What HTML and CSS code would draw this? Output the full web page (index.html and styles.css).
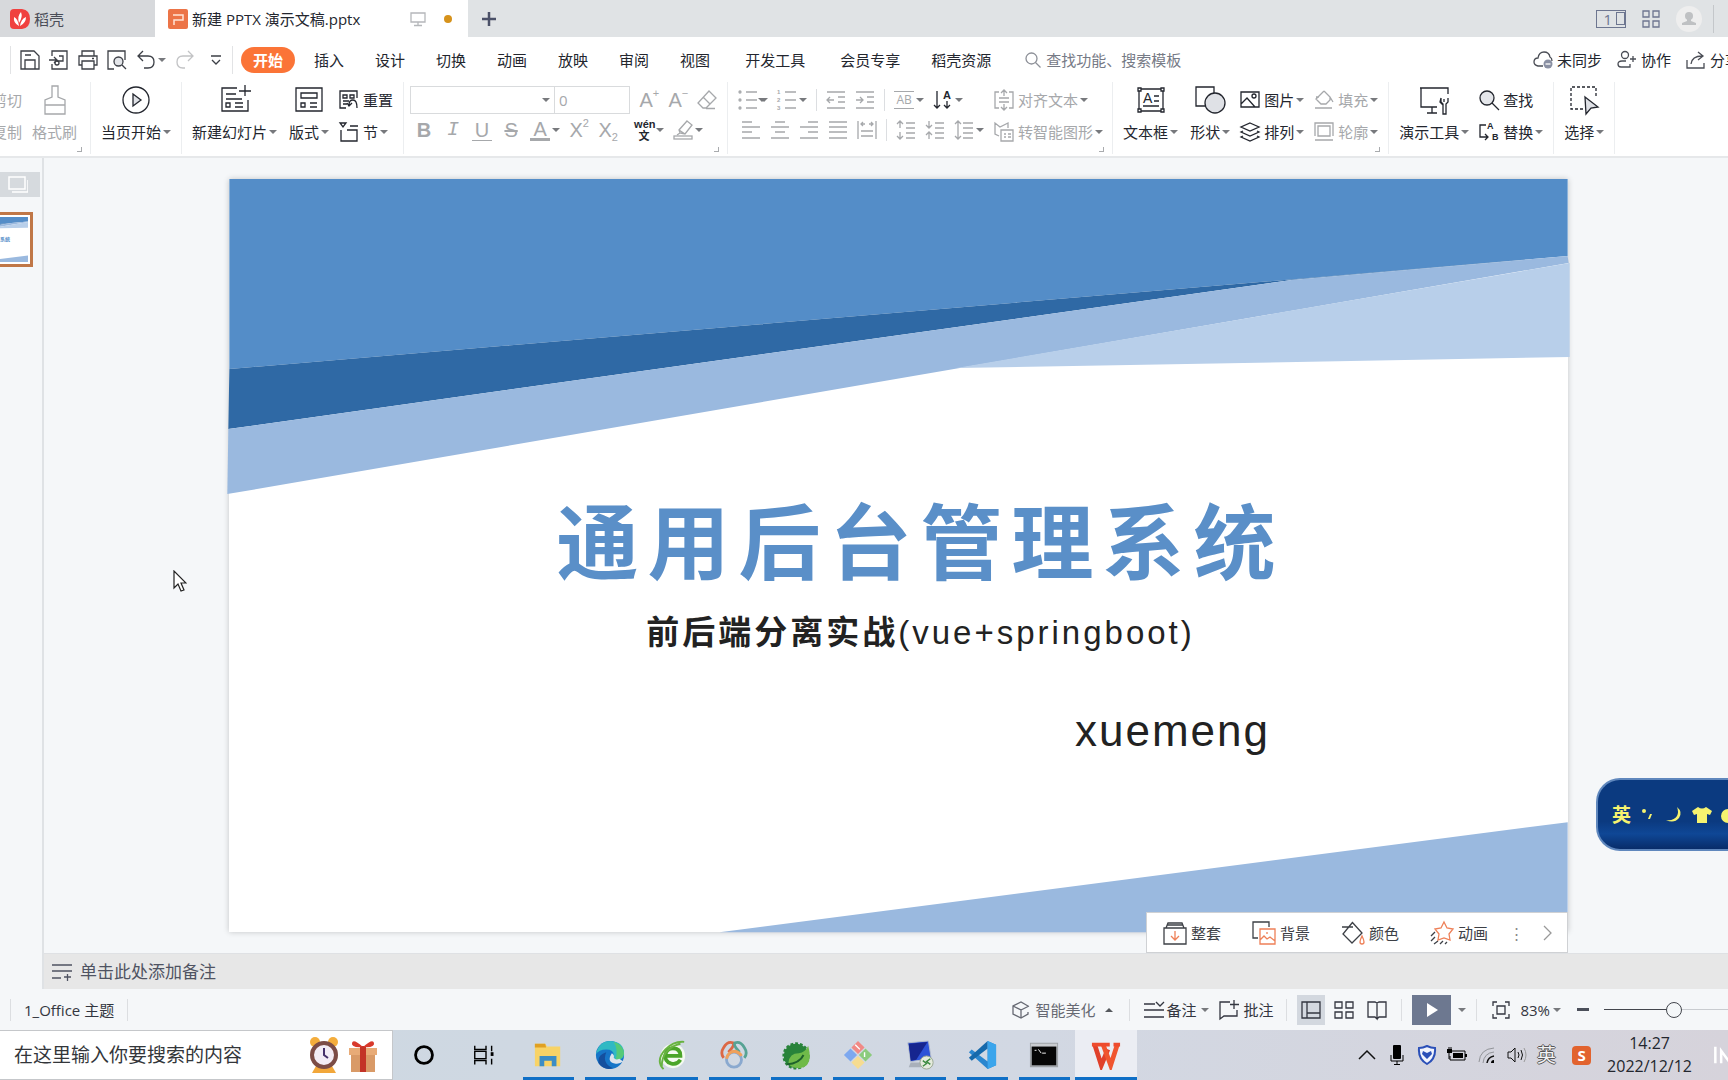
FILE: index.html
```html
<!DOCTYPE html>
<html lang="zh-CN">
<head>
    <meta charset="UTF-8">
    <meta name="viewport" content="width=device-width, initial-scale=1.0">
    <title>新建 PPTX 演示文稿.pptx</title>
    <link rel="stylesheet" href="styles.css">
</head>
<body>

    <!-- Tabs -->
    <header class="tab-bar">
        <button class="tab">
            <svg class="logo" viewBox="0 0 20 20"><path d="M4 0H12Q20 1 20 10T12 20H4Q0 20 0 16V4Q0 0 4 0Z" fill="#f0413f"/><path d="M9 17Q3 14 4 8Q8 10 9 17ZM9 14Q7 7 11 3Q13 8 9 14ZM10 17Q11 10 16 8Q16 14 10 17Z" fill="#fff"/></svg>
            稻壳
        </button>
        <button class="tab tab-active">
            <svg class="logo" viewBox="0 0 20 20"><rect width="20" height="20" rx="2" fill="#ec7447"/><path d="M5 6H15V11H6V16" fill="none" stroke="#ffe3d6" stroke-width="1.500"/></svg>
            <span class="tab-name">新建 PPTX 演示文稿.pptx</span>
            <svg class="icon icon-sm light" viewBox="0 0 16 16"><path d="M1 2H15V11H1ZM8 11V14M4 14.500H12"/></svg>
            <i class="dot"></i>
        </button>
        <button class="new-tab" aria-label="新建"><svg class="icon icon-sm" viewBox="0 0 16 16"><path d="M8 1V15M1 8H15" stroke-width="2.500"/></svg></button>
        <div class="window-tools">
            <button class="page-switch" aria-label="页面"><span>1</span><i></i></button>
            <button aria-label="应用"><svg class="icon" viewBox="0 0 20 20"><path d="M2 2H8V8H2ZM12 2H18V8H12ZM2 12H8V18H2ZM12 12H18V18H12Z"/></svg></button>
            <button class="avatar" aria-label="账户"><svg viewBox="0 0 26 26"><circle cx="13" cy="13" r="13" fill="#eeeeee"/><circle cx="13" cy="10" r="4" fill="#bfc1c3"/><path d="M11 12H15V15L20 17V19H6V17L11 15Z" fill="#bfc1c3"/></svg></button>
            <i class="sep"></i>
        </div>
    </header>

    <!-- Menu -->
    <nav class="menu-bar">
        <div class="quick">
            <button aria-label="保存"><svg class="icon" viewBox="0 0 20 20"><path d="M1 1H14L19 6V19H1ZM5 19V10H15V19M5 5H11"/></svg></button>
            <button aria-label="导出"><svg class="icon" viewBox="0 0 20 20"><path d="M3 6V1H18V19H3V14M0 10H8M5 7L8 10L5 13M10 6H14V11H8"/><circle cx="8" cy="13" r="2"/></svg></button>
            <button aria-label="打印"><svg class="icon" viewBox="0 0 20 20"><path d="M4 6V1H16V6M4 15H1V6H19V15H16M4 11H16V19H4ZM14 8.500H16"/></svg></button>
            <button aria-label="预览"><svg class="icon" viewBox="0 0 20 20"><path d="M7 19H1V1H18V10M15 15L19 19"/><circle cx="11.500" cy="11.500" r="4.500" fill="#e4e6ea"/></svg></button>
            <button aria-label="撤销"><svg class="icon" viewBox="0 0 20 20"><path d="M7 1L2 6L7 11M2 6H12Q18 6 18 12T12 18H8"/></svg><i class="caret"></i></button>
            <button class="off" aria-label="恢复"><svg class="icon" viewBox="0 0 20 20"><path d="M13 1L18 6L13 11M18 6H8Q2 6 2 12T8 18H10"/></svg></button>
            <button aria-label="更多"><svg class="icon icon-sm" viewBox="0 0 16 16"><path d="M3 4H13M4 8L8 12L12 8"/></svg></button>
        </div>
        <ul class="menu">
            <li><a class="current" href="#">开始</a></li>
            <li><a href="#">插入</a></li>
            <li><a href="#">设计</a></li>
            <li><a href="#">切换</a></li>
            <li><a href="#">动画</a></li>
            <li><a href="#">放映</a></li>
            <li><a href="#">审阅</a></li>
            <li><a href="#">视图</a></li>
            <li class="wide"><a href="#">开发工具</a></li>
            <li class="wide"><a href="#">会员专享</a></li>
            <li><a href="#">稻壳资源</a></li>
        </ul>
        <label class="search">
            <svg class="icon icon-sm" viewBox="0 0 16 16"><circle cx="6.500" cy="6.500" r="5.500"/><path d="M10.500 10.500L15.500 15.500"/></svg>
            <input type="text" placeholder="查找功能、搜索模板" aria-label="查找功能、搜索模板">
        </label>
        <div class="share">
            <button><svg class="icon" viewBox="0 0 20 20"><path d="M10 16H5Q1 15 1 12Q1 8 5 8Q6 2 11 2Q16 2 17 7Q19 8 19 11"/><circle cx="15" cy="14" r="4.500" fill="#8a90a3" stroke="none"/><path d="M12.500 14H17.500" stroke="#fff"/></svg>未同步</button>
            <button><svg class="icon" viewBox="0 0 20 20"><circle cx="8" cy="5" r="3.500"/><path d="M9 11H5Q1 11 1 14Q1 17 4 17H13V14M16 6V12M13 9H19"/></svg>协作</button>
            <button><svg class="icon" viewBox="0 0 20 20"><path d="M1 10V18H18V13M5 14Q6 6 16 6M12 2L17 6L12 10"/></svg>分享</button>
        </div>
    </nav>

    <!-- Ribbon -->
    <section class="ribbon">
        <div class="group clip">
            <div class="stack off">
                <button class="small">剪切</button>
                <button class="small">复制</button>
            </div>
            <button class="big off"><svg class="icon icon-lg" viewBox="0 0 30 30"><path d="M12 1H18V12L25 15V29H5V15L12 12ZM5 20H25"/></svg><span>格式刷</span></button>
            <i class="corner"></i>
        </div>
        <div class="group">
            <button class="big"><svg class="icon icon-lg" viewBox="0 0 30 30"><circle cx="15" cy="15" r="13"/><path d="M12 9L20 15L12 21Z" fill="#dfe1e6"/></svg><span>当页开始<i class="caret"></i></span></button>
        </div>
        <div class="group slides">
            <button class="big"><svg class="icon icon-lg" viewBox="0 0 30 30"><path d="M17 3H2V26H28V15M25 0V11M19 6H31M6 9H16M6 14H22M15 18H23M15 22H23M6 18H10V22H6Z"/></svg><span>新建幻灯片<i class="caret"></i></span></button>
            <button class="big"><svg class="icon icon-lg" viewBox="0 0 30 30"><path d="M2 3H28V26H2ZM7 8H23V13H7ZM16 18H23M16 22H23M7 18H11V22H7Z"/></svg><span>版式<i class="caret"></i></span></button>
            <div class="stack">
                <button class="small"><svg class="icon" viewBox="0 0 20 20"><path d="M7 18H1V1H18V8M4 5H8V8H4ZM11 5H15V8H11ZM4 11H10M4 14H8M10 15Q10 10 14 10Q18 10 18 18M8 13L10 16L13 13"/></svg>重置</button>
                <button class="small"><svg class="icon" viewBox="0 0 20 20"><path d="M11 4H19M2 8V19H18V8H8M1 1H7L4 5Z"/></svg>节<i class="caret"></i></button>
            </div>
        </div>
        <div class="group font-group off">
            <div class="rows">
                <div class="row">
                    <div class="combo">
                        <label class="font-name"><input type="text" aria-label="字体"><i class="caret"></i></label>
                        <label class="font-size"><input type="text" value="0" aria-label="字号"><i class="caret"></i></label>
                    </div>
                    <button class="tool letter">A<sup>+</sup></button>
                    <button class="tool letter">A<sup>−</sup></button>
                    <button class="tool" aria-label="清除"><svg class="icon" viewBox="0 0 20 20"><path d="M12 1L19 8L9 18H6L1 13ZM6 7L13 14M9 18.500H18"/></svg></button>
                </div>
                <div class="row row-font">
                    <button class="tool letter bold">B</button>
                    <button class="tool letter italic">I</button>
                    <button class="tool letter"><span class="under">U</span></button>
                    <button class="tool letter strike">S</button>
                    <button class="tool letter"><span class="ink">A</span><i class="caret"></i></button>
                    <button class="tool letter">X<sup>2</sup></button>
                    <button class="tool letter">X<sub>2</sub></button>
                    <button class="tool pinyin"><span>wén<br>文</span><i class="caret"></i></button>
                    <button class="tool" aria-label="突出显示"><svg class="icon" viewBox="0 0 20 20"><path d="M14 1L19 5L12 14L7 13L6 10ZM7 13L4 15M6 10L12 14"/><rect x="1" y="16" width="18" height="3"/></svg><i class="caret"></i></button>
                </div>
            </div>
            <i class="corner"></i>
        </div>
        <div class="group para-group off">
            <div class="rows">
                <div class="row">
                    <button class="tool" aria-label="项目符号"><svg class="icon" viewBox="0 0 20 20"><path d="M8 2H19M8 10H19M8 18H19"/><circle cx="2" cy="2" r="1"/><circle cx="2" cy="10" r="1"/><circle cx="2" cy="18" r="1"/></svg><i class="caret"></i></button>
                    <button class="tool" aria-label="编号"><svg class="icon" viewBox="0 0 20 20"><path d="M8 2H19M8 10H19M8 18H19"/><g class="num"><text x="0" y="4">1</text><text x="0" y="12">2</text><text x="0" y="20">3</text></g></svg><i class="caret"></i></button>
                    <i class="sep"></i>
                    <button class="tool" aria-label="减少缩进"><svg class="icon" viewBox="0 0 20 20"><path d="M1 2H19M12 7H19M12 12H19M1 18H19M8 10H1M4 7L1 10L4 13"/></svg></button>
                    <button class="tool" aria-label="增加缩进"><svg class="icon" viewBox="0 0 20 20"><path d="M1 2H19M12 7H19M12 12H19M1 18H19M1 10H8M5 7L8 10L5 13"/></svg></button>
                    <i class="sep"></i>
                    <button class="tool"><span class="ab">AB</span><i class="caret"></i></button>
                    <button class="tool dark" aria-label="文字方向"><svg class="icon" viewBox="0 0 20 20"><path d="M4 1V18M1 15L4 18L7 15M14 11V18M11 15L14 18L17 15"/><text class="num num-lg" x="10" y="9">A</text></svg><i class="caret"></i></button>
                </div>
                <div class="row row-para">
                    <button class="tool" aria-label="左对齐"><svg class="icon" viewBox="0 0 20 20"><path d="M1 2H11M1 7H19M1 12H11M1 18H19"/></svg></button>
                    <button class="tool" aria-label="居中"><svg class="icon" viewBox="0 0 20 20"><path d="M5 2H15M1 7H19M5 12H15M1 18H19"/></svg></button>
                    <button class="tool" aria-label="右对齐"><svg class="icon" viewBox="0 0 20 20"><path d="M9 2H19M1 7H19M9 12H19M1 18H19"/></svg></button>
                    <button class="tool" aria-label="两端对齐"><svg class="icon" viewBox="0 0 20 20"><path d="M1 2H19M1 7H19M1 12H19M1 18H19"/></svg></button>
                    <button class="tool" aria-label="分散对齐"><svg class="icon" viewBox="0 0 20 20"><path d="M1 1V19M19 1V19M4 11H16M4 16H16M4 4H8M12 4H16M6 2L4 4L6 6M14 2L16 4L14 6"/></svg></button>
                    <i class="sep"></i>
                    <button class="tool" aria-label="增大行距"><svg class="icon" viewBox="0 0 20 20"><path d="M10 3H19M10 8H19M10 13H19M10 18H19M4 8V1M1 4L4 1L7 4M4 12V19M1 16L4 19L7 16"/></svg></button>
                    <button class="tool" aria-label="减小行距"><svg class="icon" viewBox="0 0 20 20"><path d="M10 3H19M10 8H19M10 13H19M10 18H19M4 1V8M1 5L4 8L7 5M4 19V12M1 15L4 12L7 15"/></svg></button>
                    <button class="tool" aria-label="行距"><svg class="icon" viewBox="0 0 20 20"><path d="M9 3H19M9 8H19M9 13H19M9 18H19M4 1V19M1 4L4 1L7 4M1 16L4 19L7 16"/></svg><i class="caret"></i></button>
                </div>
            </div>
            <div class="stack">
                <button class="small"><svg class="icon" viewBox="0 0 20 20"><path d="M5 2H1V18H5M15 2H19V18H15M5 8H15M5 12H15M10 0V6M10 14V20M7 3L10 0L13 3M7 17L10 20L13 17"/></svg>对齐文本<i class="caret"></i></button>
                <button class="small"><svg class="icon" viewBox="0 0 20 20"><path d="M5 14L1 12V1L6 5L14 1V6M7 8H19V19H7ZM10 12H12M14 12H17M10 15H12M14 15H17"/></svg>转智能图形<i class="caret"></i></button>
            </div>
            <i class="corner"></i>
        </div>
        <div class="group slides">
            <button class="big"><svg class="icon icon-lg" viewBox="0 0 30 30"><path d="M3 4H27V26H3ZM18 11H23M18 16H23M7 21H23"/><path d="M2 3H5V6H2ZM25 3H28V6H25ZM2 24H5V27H2ZM25 24H28V27H25Z" fill="#fff"/><text class="num num-xl" x="7" y="18">A</text></svg><span>文本框<i class="caret"></i></span></button>
            <button class="big"><svg class="icon icon-lg" viewBox="0 0 30 30"><path d="M1 2H19V21H1Z"/><circle cx="20" cy="18" r="10" fill="#dfe1e6"/></svg><span>形状<i class="caret"></i></span></button>
            <div class="stack">
                <button class="small"><svg class="icon" viewBox="0 0 20 20"><path d="M1 2H19V17H1ZM1 14L7 8L15 17"/><circle cx="14" cy="6" r="2"/></svg>图片<i class="caret"></i></button>
                <button class="small"><svg class="icon" viewBox="0 0 20 20"><path d="M10 1L19 5L10 9L1 5ZM3 9L1 10L10 14L19 10L17 9M3 14L1 15L10 19L19 15L17 14"/></svg>排列<i class="caret"></i></button>
            </div>
            <div class="stack off">
                <button class="small"><svg class="icon" viewBox="0 0 20 20"><path d="M10 1L16 7V10L12 14H7L2 9L10 1M2 7H5M16 7L19 12M1 18H18"/></svg>填充<i class="caret"></i></button>
                <button class="small"><svg class="icon" viewBox="0 0 20 20"><path d="M1 14V1H19V14M4 4H16V14H4ZM1 18H19"/></svg>轮廓<i class="caret"></i></button>
            </div>
            <i class="corner"></i>
        </div>
        <div class="group">
            <button class="big"><svg class="icon icon-lg" viewBox="0 0 30 30"><path d="M1 3H29V9M2 3V22H18M13 22V28M8 28H18M22 13V17L24 19V29H27V19L29 17V13M22 13L21 17L24 20M25 14V17"/></svg><span>演示工具<i class="caret"></i></span></button>
            <div class="stack">
                <button class="small"><svg class="icon" viewBox="0 0 20 20"><circle cx="8" cy="8" r="7" fill="#e4e6ea"/><path d="M13 13L20 20"/></svg>查找</button>
                <button class="small"><svg class="icon" viewBox="0 0 20 20"><path d="M7 3H1V15H9M6 12L9 15L6 18"/><g class="num num-md"><text x="8" y="7">A</text><text x="13" y="18">B</text></g></svg>替换<i class="caret"></i></button>
            </div>
        </div>
        <div class="group">
            <button class="big"><svg class="icon icon-lg" viewBox="0 0 30 30"><path d="M14 24H2V2H27V12" stroke-dasharray="3 2"/><path d="M16 12L29 22L22 23L17 29Z" fill="#dfe1e6"/></svg><span>选择<i class="caret"></i></span></button>
        </div>
    </section>

    <!-- Editor -->
    <main class="editor">
        <aside class="outline">
            <button class="outline-toggle" aria-label="幻灯片"><svg viewBox="0 0 20 20"><path d="M1 2H17V14H1Z" fill="none" stroke="#fff" stroke-width="1.500"/><path d="M4 17H20V5" fill="none" stroke="#fff" stroke-width="1.500"/></svg></button>
            <button class="thumb">
                <svg viewBox="0 0 1338 753"><use href="#slide-art"/></svg>
                <span class="thumb-title">通用后台管理系统</span>
            </button>
        </aside>
        <div class="work">
            <div class="stage">
                <article class="slide">
                    <svg class="slide-art" viewBox="0 0 1338 753">
                        <g id="slide-art">
                            <path d="M0 0H1338V77L0 190Z" fill="#548dc8"/>
                            <path d="M0 190L1338 77L1062 101L-1 250Z" fill="#2f69a5"/>
                            <path d="M-1 250L1062 101L1338 77L1339 84L-2 315Z" fill="#9ab9df"/>
                            <path d="M727 189L1340 84V178Z" fill="#b8cfea"/>
                            <path d="M490 753L1338 643V753Z" fill="#9ab9df"/>
                        </g>
                    </svg>
                    <h1>通用后台管理系统</h1>
                    <h2><b>前后端分离实战</b>(vue+springboot)</h2>
                    <p>xuemeng</p>
                </article>
                <div class="beautify">
                    <button><svg class="icon icon-md" viewBox="0 0 24 24"><path d="M1 7H23V23H1ZM3 7L5 2H19L21 7M4 4H20"/><path class="orange" d="M12 10V19M8 15L12 19L16 15"/></svg>整套</button>
                    <button><svg class="icon icon-md" viewBox="0 0 24 24"><path d="M6 17H1V1H17V6"/><path class="orange" d="M8 8H23V23H8ZM8 19L12 15L15 18L18 16L23 20M15 11V13"/></svg>背景</button>
                    <button><svg class="icon icon-md" viewBox="0 0 24 24"><path d="M11 1L21 12L11 22L2 13L11 2M1 6H12"/><path class="orange" d="M21 15Q17 23 21 23T21 15Z" fill="#fff"/></svg>颜色</button>
                    <button><svg class="icon icon-md" viewBox="0 0 24 24"><path class="orange" d="M14 1L17 7L23 8L19 13L20 19L14 17L8 19L9 13L5 8L11 7Z"/><path d="M1 15L5 11M1 20L5 16M4 23L8 20M10 23L13 20M15 23L17 21"/></svg>动画</button>
                    <button class="more" aria-label="更多">⋮</button>
                    <button class="next" aria-label="下一页"><svg class="icon icon-sm" viewBox="0 0 16 16"><path d="M5 1L12 8L5 15"/></svg></button>
                </div>
                <svg class="pointer" viewBox="0 0 14 22"><path d="M1 1V18L5 14L8 21L11 20L8 13H13Z" fill="#fff" stroke="#222" stroke-width="1.200"/></svg>
            </div>
            <label class="notes">
                <svg class="icon" viewBox="0 0 20 20"><path d="M0 3H20M0 9H20M0 16H9M12 15H19M15.500 12V19"/></svg>
                <input type="text" placeholder="单击此处添加备注" aria-label="单击此处添加备注">
            </label>
        </div>
    </main>

    <!-- Status bar -->
    <footer class="status">
        <i class="sep"></i>
        <span class="theme">1_Office 主题</span>
        <i class="sep"></i>
        <div class="status-right">
            <button class="smart"><svg class="icon" viewBox="0 0 20 20"><path d="M17 12V14L10 18L2 14V6L10 2L17 6M2 6L10 10V18M10 10L18 6"/></svg>智能美化<i class="caret up"></i></button>
            <i class="sep"></i>
            <button class="tight"><svg class="icon" viewBox="0 0 20 20"><path d="M0 4H11M0 10H20M0 17H20M12 2L16 6L20 2"/></svg>备注<i class="caret"></i></button>
            <button class="comment"><svg class="icon" viewBox="0 0 20 20"><path d="M11 2H1V19L5 16H18V10M15 0V9M11 4.500H20"/></svg>批注</button>
            <i class="sep"></i>
            <button class="view selected" aria-label="普通"><svg class="icon" viewBox="0 0 20 20"><path d="M1 2H19V18H1ZM6 2V18M6 13H19"/></svg></button>
            <button class="view" aria-label="浏览"><svg class="icon" viewBox="0 0 20 20"><path d="M1 2H8V8H1ZM12 2H19V8H12ZM1 12H8V18H1ZM12 12H19V18H12Z"/></svg></button>
            <button class="view" aria-label="阅读"><svg class="icon" viewBox="0 0 20 20"><path d="M10 3V19L8 17H1V2H8L10 3L12 2H19V17H12L10 19"/></svg></button>
            <i class="sep"></i>
            <button class="play" aria-label="放映"><svg viewBox="0 0 20 20"><path d="M5 3L16 10L5 17Z" fill="#fff"/></svg></button>
            <button aria-label="放映选项"><i class="caret"></i></button>
            <i class="sep"></i>
            <button class="zoom"><svg class="icon" viewBox="0 0 20 20"><path d="M6 2H2V6M14 2H18V6M2 14V18H6M18 14V18H14M6 6H14V14H6Z"/></svg>83%<i class="caret"></i></button>
            <button class="minus" aria-label="缩小"></button>
            <input class="slider" type="range" min="0" max="100" value="40" aria-label="缩放">
        </div>
    </footer>

    <!-- Taskbar -->
    <footer class="taskbar">
        <label class="task-search">
            <input type="text" placeholder="在这里输入你要搜索的内容" aria-label="在这里输入你要搜索的内容">
            <svg viewBox="0 0 30 38"><path d="M7 30H23L27 37H3Z" fill="#f2a73a"/><circle cx="6" cy="6" r="5" fill="#f4ad3c"/><circle cx="24" cy="6" r="5" fill="#f4ad3c"/><circle cx="15" cy="19" r="12" fill="#f3ecf5" stroke="#7c4c46" stroke-width="4"/><path d="M15 12V19L19 22" fill="none" stroke="#46306a" stroke-width="2"/></svg>
            <svg viewBox="0 0 30 38"><path d="M3 18H27V36H3Z" fill="#d99a67"/><path d="M1 12H29V19H1Z" fill="#e8ab77"/><path d="M12 10H18V36H12Z" fill="#c33327"/><path d="M15 11Q3 12 4 7Q5 2 15 11Q25 2 26 7Q27 12 15 11Z" fill="#d8392c"/></svg>
        </label>
        <div class="apps">
            <button class="app" aria-label="Cortana"><svg viewBox="0 0 32 32"><circle cx="16" cy="16" r="9" fill="none" stroke="#000" stroke-width="3"/></svg></button>
            <button class="app" aria-label="任务视图"><svg viewBox="0 0 32 32"><path d="M4 6V10H16V6M4 26V22H16V26M4 12H16V20H4ZM22 6V12M22 20V26" fill="none" stroke="#000" stroke-width="1.500"/><path d="M21 13H24V17H21Z"/></svg></button>
            <button class="app open" aria-label="文件"><svg viewBox="0 0 32 32"><path d="M2 4H13L15 7H29V28H2Z" fill="#f8d366"/><path d="M2 4H13L14 8H2Z" fill="#e0a023"/><path d="M7 28V17H25V28H20V22H12V28Z" fill="#3c8dc5"/></svg></button>
            <button class="app open" aria-label="Edge"><svg viewBox="0 0 32 32"><circle cx="16" cy="16" r="15" fill="#1675c8"/><path d="M1 15Q4 1 17 1Q31 2 31 15Q30 22 22 21Q18 20 20 16Q20 10 12 10Q4 10 1 15Z" fill="#31b9c3"/><path d="M20 2Q31 5 31 15Q29 22 22 21Q25 10 20 2Z" fill="#55ca78"/><path d="M12 13Q7 25 19 30Q10 33 4 25Q2 16 12 13Z" fill="#144f9e"/><path d="M18 14Q12 23 21 25Q26 26 30 23L26 20Q22 22 20 19Q21 16 18 14Z" fill="#dce3ec"/></svg></button>
            <button class="app open" aria-label="浏览器"><svg viewBox="0 0 32 32"><circle cx="17" cy="17" r="13" fill="#f4faf0"/><path d="M25 21Q21 27 15 25Q8 23 9 16Q10 9 17 9Q25 9 25 17H10" fill="none" stroke="#4ba529" stroke-width="4"/><path d="M7 31Q-2 22 9 10Q18 1 29 2M5 29Q5 9 25 4" fill="none" stroke="#68b341" stroke-width="2"/></svg></button>
            <button class="app open" aria-label="Navicat"><svg viewBox="0 0 32 32" fill="none" stroke-width="3"><path d="M5 19Q1 14 5 8Q9 1 15 3Q17 6 10 13" stroke="#dc6845"/><path d="M27 19Q31 14 27 8Q23 1 17 3Q15 6 22 13" stroke="#57a394"/><circle cx="16" cy="21" r="8" stroke="#8aa9cf"/><path d="M8 20Q10 12 17 12Q22 13 24 17" stroke="#efa15c"/></svg></button>
            <button class="app open" aria-label="Spring"><svg viewBox="0 0 32 32"><circle cx="16" cy="17" r="13" fill="#28833a" stroke="#28833a" stroke-width="3" stroke-dasharray="3 2"/><path d="M29 6Q35 28 20 30Q9 30 8 24Q9 14 19 14Q26 13 29 6Z" fill="#6fba49"/><path d="M6 26Q20 25 24 16" fill="none" stroke="#1d612c" stroke-width="2"/></svg></button>
            <button class="app open" aria-label="Git"><svg viewBox="0 0 32 32"><path d="M16 1L23 8L16 15L9 8Z" fill="#f18a86"/><path d="M8 9L15 16L8 23L1 16Z" fill="#7da8ef"/><path d="M24 9L31 16L24 23L17 16Z" fill="#8ccb7d"/><path d="M16 17L23 24L16 31L9 24Z" fill="#f6dc91"/><path d="M13 5L18 10M23 13V18" stroke="#fff" stroke-width="1.500"/></svg></button>
            <button class="app open" aria-label="远程桌面"><svg viewBox="0 0 32 32"><path d="M3 3L25 1L28 20L6 23Z" fill="#2d53d8" stroke="#b8bfcb"/><path d="M4 4L24 2L12 21L6 22Z" fill="#16258f"/><path d="M6 24H17V29H4Z" fill="#a9b0ba"/><circle cx="23" cy="24" r="7" fill="#e5ebdd" stroke="#99a58f"/><path d="M19 22L23 25L19 28M27 20L23 23L27 26" fill="none" stroke="#3b8a3f" stroke-width="1.500"/></svg></button>
            <button class="app open" aria-label="VS Code"><svg viewBox="0 0 32 32"><path d="M22 1L31 5V27L22 31L2 13L5 10L22 23Z" fill="#2a86cf"/><path d="M22 9L5 22L2 19L22 1Z" fill="#1669ab"/><path d="M22 1L31 5V27L22 31Z" fill="#3ba5ec"/></svg></button>
            <button class="app open" aria-label="终端"><svg viewBox="0 0 32 32"><path d="M2 4H30V28H2Z" fill="#060606" stroke="#9fa3a8" stroke-width="2"/><path d="M2 4H30V7H2Z" fill="#c9ccd0"/><path d="M6 11H8M10 10L13 14M14 14H18" stroke="#fff" fill="none"/></svg></button>
            <button class="app open focused" aria-label="WPS"><svg viewBox="0 0 32 32" fill="none" stroke-width="5"><path d="M4 5L11 27L18 10" stroke="#e0402a"/><path d="M13 5L21 27L28 5" stroke="#f0552f"/><path d="M1 5H20M24 5H31" stroke="#ee4b2d" stroke-width="4"/></svg></button>
        </div>
        <div class="tray">
            <svg viewBox="0 0 20 20"><path d="M2 14L10 6L18 14" fill="none" stroke="#111" stroke-width="1.500"/></svg>
            <svg viewBox="0 0 20 20"><rect x="6" y="0" width="8" height="14" rx="1"/><path d="M4 10V16H16V10M10 16V20M7 19.500H13" fill="none" stroke="#000"/></svg>
            <svg viewBox="0 0 20 20"><path d="M10 1Q14 3 18 3Q19 14 10 19Q1 14 2 3Q6 3 10 1Z" fill="#f1f4fd" stroke="#2b50b8" stroke-width="2"/><path d="M6 6L10 8L14 6L15 9L10 14L5 9Z" fill="#2b50b8"/></svg>
            <svg viewBox="0 0 20 20"><path d="M5 6H18V15H3V11" fill="none" stroke="#000"/><path d="M6 8H16V13H6ZM18 9H20V12H18ZM0 4H5V8H0Z"/><path d="M2 2V14M4 2V5" stroke="#000"/></svg>
            <svg viewBox="0 0 20 20" fill="none"><path d="M2 17Q3 4 17 3M6 18Q7 8 17 7" stroke="#929499"/><path d="M10 18Q11 12 17 11" stroke="#111" stroke-width="1.500"/><path d="M14 18Q14 15 17 15V18Z" fill="#000"/></svg>
            <svg viewBox="0 0 20 20" fill="none" stroke="#111"><path d="M1 7H4L8 3V17L4 13H1ZM11 7Q13 10 11 13M14 5Q17 10 14 15"/><path d="M17 3Q21 10 17 17" stroke="#999"/></svg>
            <span class="lang">英</span>
            <span class="sogou">S</span>
            <time>14:27<br>2022/12/12</time>
            <svg class="corner-mark" viewBox="0 0 20 24"><path d="M2 2V22M9 22V7L20 22" fill="none" stroke="#fff" stroke-width="3"/></svg>
        </div>
    </footer>

    <!-- Input method bar -->
    <div class="ime">
        <span>英</span>
        <svg viewBox="0 0 20 20"><circle cx="6" cy="6" r="2"/><path d="M12 9H14L12 14H10Z"/></svg>
        <svg viewBox="0 0 20 20"><path d="M12 2Q18 7 14 13Q9 19 1 15Q9 16 12 11Q14 7 12 2Z"/></svg>
        <svg viewBox="0 0 20 20"><path d="M6 2Q10 5 14 2L20 6L18 10L15 9V18H5V9L2 10L0 6Z"/></svg>
        <svg viewBox="0 0 20 20"><circle cx="9" cy="11" r="7"/></svg>
    </div>

</body>
</html>
```

FILE: styles.css
```css
* {
    box-sizing: border-box;
}
body {
    margin: 0;
    height: 100vh;
    display: flex;
    flex-direction: column;
    overflow: hidden;
    position: relative;
    background: #f5f7f9;
    color: #23262e;
    font-family: "Open Sans", "Noto Sans CJK SC", sans-serif;
    font-size: 15px;
    line-height: 20px;
}
button {
    display: flex;
    align-items: center;
    flex-shrink: 0;
    padding: 0;
    border: none;
    background: none;
    color: inherit;
    font: inherit;
    white-space: nowrap;
}
input {
    min-width: 0;
    padding: 0;
    border: none;
    outline: none;
    background: none;
    color: inherit;
    font: inherit;
}
.icon {
    width: 20px;
    height: 20px;
    flex-shrink: 0;
    overflow: visible;
    fill: none;
    stroke: currentColor;
    stroke-width: 1.3;
}
.icon-sm { width: 16px; height: 16px; }
.icon-md { width: 24px; height: 24px; }
.icon-lg { width: 30px; height: 30px; }
.num {
    fill: currentColor;
    stroke: none;
    font-family: "Liberation Sans", sans-serif;
    font-size: 6px;
    font-weight: bold;
}
.num-md { font-size: 9px; }
.num-lg { font-size: 11px; }
.num-xl { font-size: 14px; font-weight: normal; }
.light { color: #b5b7ba; }
.orange { stroke: #ee8058; }
.off { color: #a6a8ab; }
.dark { color: #23262e; }
.caret {
    flex-shrink: 0;
    display: inline-block;
    margin-left: 2px;
    border: 4px solid transparent;
    border-top-color: #77797d;
    border-bottom: none;
}
.caret.up {
    border-top: none;
    border-bottom: 4px solid #55585d;
}
.sep {
    width: 1px;
    height: 22px;
    flex-shrink: 0;
    background: #dcdee1;
}

/* tabs */
.tab-bar {
    display: flex;
    height: 37px;
    flex-shrink: 0;
    background: #e0e3e5;
}
.tab {
    gap: 4px;
    width: 155px;
    padding-left: 10px;
    background: #d7d9dc;
    color: #4a4d57;
}
.tab-active {
    width: 313px;
    padding: 0 16px 0 13px;
    background: #fff;
    color: #23262e;
}
.tab-name { flex: 1; text-align: left; }
.logo { width: 20px; height: 20px; }
.dot {
    width: 8px;
    height: 8px;
    margin-left: 14px;
    border-radius: 50%;
    background: #d6921b;
}
.new-tab { margin-left: 13px; color: #4b5168; }
.window-tools {
    display: flex;
    align-items: center;
    gap: 15px;
    margin-left: auto;
    padding-right: 14px;
    color: #6d7690;
}
.page-switch {
    width: 30px;
    height: 18px;
    justify-content: flex-end;
    gap: 4px;
    border: 1px solid #6d7690;
}
.page-switch i {
    width: 9px;
    height: 13px;
    border: 1px solid #6d7690;
}
.avatar { width: 26px; height: 26px; }
.avatar svg { width: 26px; }
.window-tools .sep { height: 28px; background: #c4c7ca; margin-left: -4px; }

/* menu */
.menu-bar {
    display: flex;
    align-items: center;
    height: 45px;
    flex-shrink: 0;
    background: #fff;
}
.quick {
    display: flex;
    align-items: center;
    gap: 9px;
    height: 28px;
    margin-left: 10px;
    padding: 0 8px 0 9px;
    border-left: 1px solid #e2e3e5;
    border-right: 1px solid #e2e3e5;
    color: #3c3f46;
}
.quick .off { color: #c2c3c5; }
.quick button:last-child { margin-left: 4px; }
.menu {
    display: flex;
    align-items: center;
    gap: 31px;
    margin: 0;
    padding: 0;
    list-style: none;
}
.menu a {
    color: inherit;
    text-decoration: none;
    white-space: nowrap;
}
.menu .current {
    display: block;
    margin: 0 -12px 0 8px;
    padding: 3px 12px;
    border-radius: 13px;
    background: #fb7437;
    color: #fff;
    font-weight: bold;
}
.menu .wide { margin-left: 4px; }
.search {
    display: flex;
    align-items: center;
    gap: 5px;
    margin-left: 34px;
    color: #8d9098;
}
.search input { width: 180px; }
.search input::placeholder { color: #767a86; opacity: 1; }
.share {
    display: flex;
    gap: 15px;
    margin-left: auto;
    margin-right: -12px;
}
.share button { gap: 4px; }
.share svg { color: #4a4d55; }

/* ribbon */
.ribbon {
    display: flex;
    height: 76px;
    flex-shrink: 0;
    background: #fff;
    border-bottom: 2px solid #e6e8ea;
}
.group {
    position: relative;
    display: flex;
    flex-shrink: 0;
    gap: 10px;
    height: 72px;
    padding: 3px 10px 0;
    border-right: 1px solid #eceef0;
}
.clip { margin-left: -18px; }
.clip .big { margin-right: 3px; }
.big {
    flex-direction: column;
    align-items: center;
    gap: 2px;
}
.big span {
    display: flex;
    align-items: center;
    height: 30px;
}
.slides .big + .big { margin-left: 2px; }
.stack, .rows {
    display: flex;
    flex-direction: column;
}
.stack { gap: 2px; }
.small { gap: 4px; height: 30px; }
.small .caret { margin-left: -2px; }
.row {
    display: flex;
    align-items: center;
    gap: 9px;
    height: 30px;
}
.corner {
    position: absolute;
    right: 8px;
    bottom: 2px;
    width: 5px;
    height: 5px;
    border-right: 1px solid #a9abae;
    border-bottom: 1px solid #a9abae;
}
.font-group { padding-left: 6px; }
.row-font { padding-left: 4px; }
.row-para { padding-left: 3px; }
.combo {
    display: flex;
    width: 220px;
    height: 28px;
    border: 1px solid #d9dbdd;
}
.combo label {
    display: flex;
    align-items: center;
    padding: 0 4px;
}
.combo input { flex: 1; }
.font-name { width: 143px; }
.font-size { flex: 1; border-left: 1px solid #d9dbdd; }
.tool svg { display: block; }
.letter {
    min-width: 20px;
    height: 26px;
    justify-content: center;
    font-family: "Liberation Sans", sans-serif;
    font-size: 20px;
}
.letter sup, .letter sub {
    width: 6px;
    font-size: 11px;
    line-height: 12px;
}
.letter sup { align-self: flex-start; }
.letter sub { align-self: flex-end; }
.bold { font-weight: bold; }
.italic { font-family: "Liberation Mono", monospace; font-style: italic; }
.strike { text-decoration: line-through; }
.under {
    width: 20px;
    border-bottom: 1px solid #a6a8ab;
}
.ink {
    width: 20px;
    border-bottom: 3px solid #a6a8ab;
    line-height: 18px;
}
.pinyin {
    margin-left: 7px;
    color: #23262e;
    font-family: "Liberation Sans", "Noto Sans CJK SC", sans-serif;
    font-size: 11px;
    font-weight: bold;
    line-height: 12px;
}
.pinyin span { width: 20px; }
.ab {
    width: 20px;
    border-top: 1px solid #a6a8ab;
    border-bottom: 1px solid #a6a8ab;
    font-size: 12px;
    line-height: 16px;
}
.para-group { gap: 10px; padding-right: 9px; }

/* editor */
.editor {
    display: flex;
    flex: 1;
    min-height: 0;
}
.outline {
    width: 44px;
    flex-shrink: 0;
    display: flex;
    flex-direction: column;
    align-items: flex-end;
    gap: 15px;
    padding: 14px 9px 0 0;
    overflow: hidden;
    border-right: 2px solid #dfe2e5;
}
.outline-toggle {
    width: 40px;
    height: 25px;
    margin-right: -7px;
    padding-left: 8px;
    background: #d6dade;
}
.outline-toggle svg { width: 20px; }
.thumb {
    position: relative;
    padding: 2px;
    border: 3px solid #c07747;
    background: #fff;
}
.thumb svg { display: block; width: 80px; height: 45px; }
.thumb-title {
    position: absolute;
    top: 20px;
    right: 20px;
    color: #548dc8;
    font-size: 5px;
    font-weight: bold;
    line-height: 8px;
}
.work {
    display: flex;
    flex: 1;
    flex-direction: column;
    min-width: 0;
}
.stage {
    position: relative;
    flex: 1;
    min-height: 0;
    padding: 21px 160px 0 185px;
    border-bottom: 1px solid #dfe1e4;
}
.slide {
    position: relative;
    aspect-ratio: 16 / 9;
    padding: 316px 272px 0 316px;
    background: #fff;
    box-shadow: 0 0 6px rgba(0, 0, 0, 0.2);
    color: #222;
    font-family: "Liberation Sans", "Noto Sans CJK SC", sans-serif;
    text-align: center;
    white-space: nowrap;
}
.slide-art {
    position: absolute;
    top: 0;
    left: 0;
    width: 100%;
    height: 100%;
    overflow: visible;
}
.slide h1, .slide h2, .slide p {
    position: relative;
    margin: 0;
}
.slide h1 {
    color: #5a8fc8;
    font-size: 82px;
    line-height: 100px;
    letter-spacing: 9px;
}
.slide h2 {
    margin-top: 18px;
    font-size: 33px;
    font-weight: normal;
    line-height: 40px;
    letter-spacing: 3px;
}
.slide p {
    margin-top: 48px;
    padding-right: 26px;
    font-size: 44px;
    line-height: 60px;
    letter-spacing: 2px;
    text-align: right;
}
.beautify {
    position: absolute;
    right: 160px;
    bottom: 0;
    display: flex;
    align-items: center;
    gap: 31px;
    height: 41px;
    padding: 0 12px 0 16px;
    border: 1px solid #cfd1d4;
    background: #fff;
    color: #3d4046;
}
.beautify button { gap: 4px; }
.beautify .more { margin-left: -10px; color: #888; }
.beautify .next { margin-left: -16px; color: #999; }
.pointer {
    position: absolute;
    top: 412px;
    left: 129px;
    width: 14px;
    height: 22px;
}
.notes {
    display: flex;
    align-items: center;
    gap: 8px;
    height: 35px;
    padding-left: 8px;
    background: #e7e7e7;
    color: #4f5362;
    font-size: 17px;
}
.notes input { flex: 1; }
.notes input::placeholder { color: #4f5362; opacity: 1; }

/* status bar */
.status {
    display: flex;
    align-items: center;
    height: 41px;
    flex-shrink: 0;
    padding-left: 10px;
    color: #333640;
}
.theme { margin: 0 13px; }
.status-right {
    display: flex;
    align-items: center;
    gap: 10px;
    margin-left: auto;
    margin-right: -46px;
}
.status-right button { gap: 3px; }
.status-right .smart { color: #666973; gap: 4px; margin-right: 6px; }
.smart .caret { margin-left: 6px; }
.status-right .tight { gap: 2px; margin-left: 4px; }
.status-right .comment { gap: 4px; margin-right: 3px; }
.tight .caret { margin-left: 3px; }
.view {
    width: 28px;
    height: 30px;
    justify-content: center;
}
.view + .view { margin-left: -5px; }
.view.selected { background: #d3d8df; }
.play {
    width: 39px;
    height: 30px;
    justify-content: center;
    background: #6d7890;
}
.play svg { width: 20px; }
.play + button { margin-left: -5px; }
.status-right .zoom { gap: 9px; margin-left: 4px; }
.zoom .caret { margin-left: -6px; }
.minus {
    width: 12px;
    height: 3px;
    margin: 0 5px 0 6px;
    background: #4b4f5a;
}
.slider {
    -webkit-appearance: none;
    appearance: none;
    width: 170px;
    height: 16px;
    margin: 0;
    background: linear-gradient(90deg, #43464d 40%, #c9ccd0 40%) center / 100% 1px no-repeat;
}
.slider::-webkit-slider-thumb {
    -webkit-appearance: none;
    width: 16px;
    height: 16px;
    border: 1px solid #43464d;
    border-radius: 50%;
    background: #f4f7f9;
}

/* taskbar */
.taskbar {
    display: flex;
    height: 50px;
    flex-shrink: 0;
    background: linear-gradient(90deg, #ccd8e1, #d2d8e3 60%, #d6d3db);
}
.task-search {
    display: flex;
    align-items: center;
    gap: 9px;
    width: 393px;
    padding: 0 14px;
    border: 1px solid #c5c7ca;
    border-left: none;
    background: #fff;
    font-size: 19px;
}
.task-search input { flex: 1; }
.task-search input::placeholder { color: #33363a; opacity: 1; }
.task-search svg { width: 30px; height: 38px; }
.apps { display: flex; }
.app {
    position: relative;
    width: 62px;
    justify-content: center;
}
.app svg { width: 30px; height: 30px; }
.app.open::after {
    content: "";
    position: absolute;
    left: 6px;
    right: 5px;
    bottom: 0;
    height: 3px;
    background: #0f6fc6;
}
.app.focused { background: #ebedf3; }
.app.focused::after { left: 0; right: 0; }
.tray {
    display: flex;
    align-items: center;
    gap: 10px;
    margin-left: auto;
    margin-right: -4px;
}
.tray svg { width: 20px; height: 20px; }
.lang {
    color: #f2f2f4;
    font-size: 19px;
    text-shadow: 1px 0 #555, -1px 0 #555, 0 1px #555, 0 -1px #555;
}
.sogou {
    width: 19px;
    height: 19px;
    margin: 0 6px;
    border-radius: 4px;
    background: #e2632e;
    color: #fff;
    font-weight: bold;
    line-height: 19px;
    text-align: center;
}
.tray time {
    font-size: 16px;
    line-height: 23px;
    text-align: center;
    margin-right: 10px;
}

/* input method bar */
.ime {
    position: absolute;
    top: 778px;
    right: -9px;
    display: flex;
    align-items: center;
    gap: 7px;
    width: 141px;
    height: 73px;
    padding-left: 14px;
    border: 2px solid #5f87bd;
    border-right: none;
    border-radius: 24px 0 0 24px;
    background: linear-gradient(#0b3a80 60%, #0f4796 78%, #082c69);
    color: #f6f36f;
    font-size: 19px;
    font-weight: bold;
}
.ime svg { width: 20px; height: 20px; flex-shrink: 0; fill: #f6f36f; }
```
